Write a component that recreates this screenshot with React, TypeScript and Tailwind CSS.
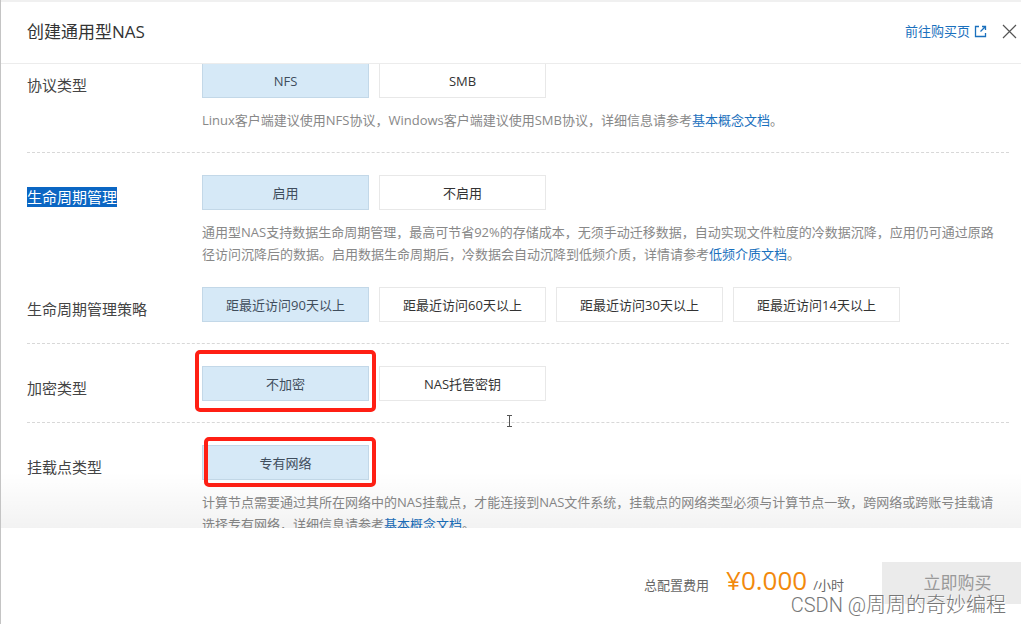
import type { ReactNode } from "react"

type OptionProps = {
    children: ReactNode
    active?: boolean
}

function Option({ children, active = false }: OptionProps) {
    return (
        <button
            type="button"
            aria-pressed={active}
            className={
                active
                    ? "w-[167px] h-[35px] pt-0.5 border border-[#c3d8e8] bg-[#d6e9f7] text-[13px] text-[#3f4d5c] cursor-pointer"
                    : "w-[167px] h-[35px] pt-0.5 border border-[#e8e8e8] bg-white text-[13px] text-[#333] cursor-pointer"
            }
        >
            {children}
        </button>
    )
}

type RowProps = {
    label: ReactNode
    options: ReactNode
    children?: ReactNode
}

function Row({ label, options, children }: RowProps) {
    return (
        <div className="flex flex-row items-start">
            <div className="w-[175px] shrink-0 mt-3 text-[15px] leading-5 text-[#444]">{label}</div>
            <div className="flex-1 min-w-0">
                <div className="flex flex-row gap-x-[10px]">{options}</div>
                {children && (
                    <p className="mt-[11px] mr-2 text-[13px] leading-[22px] text-[#888]">{children}</p>
                )}
            </div>
        </div>
    )
}

function Section({ children }: { children: ReactNode }) {
    return (
        <section className="flex flex-col gap-y-[22px] pt-[22px] pb-[21px] border-b border-dashed border-[#d8d8d8] first:pt-0 last:border-none">
            {children}
        </section>
    )
}

function DocLink({ children }: { children: ReactNode }) {
    return (
        <a href="#docs" className="text-[#1a70bd] hover:underline">
            {children}
        </a>
    )
}

function ExternalIcon() {
    return (
        <svg width="13" height="13" viewBox="0 0 13 13" fill="none" stroke="currentColor" strokeWidth="1.3" aria-hidden="true">
            <path d="M5 1.500H1.500v10h10V8" />
            <path d="M8 1.500h3.500V5M11.500 1.500L6.500 6.500" />
        </svg>
    )
}

function CloseIcon() {
    return (
        <svg width="15" height="15" viewBox="0 0 15 15" fill="none" stroke="currentColor" strokeWidth="1.2" aria-hidden="true">
            <path d="M1 1l13 13M14 1L1 14" />
        </svg>
    )
}

function TextCursor() {
    return (
        <svg className="absolute left-[504px] top-[415px]" width="9" height="12" viewBox="0 0 9 12" fill="none" stroke="#555" aria-hidden="true">
            <path d="M2 .5h5M4.500 1v10M2 11.500h5" />
        </svg>
    )
}

function Header() {
    return (
        <header className="h-16 shrink-0 flex flex-row items-center justify-between pl-[26px] pr-1 pb-0.5 border-t-2 border-t-[#f0f0f0] border-b border-b-[#ececec]">
            <h1 className="text-[17px] text-[#333]">创建通用型NAS</h1>
            <div className="flex flex-row items-center gap-x-[15px]">
                <a href="#buy" className="flex flex-row items-center gap-x-1 text-[13px] text-[#1a70bd]">
                    前往购买页
                    <ExternalIcon />
                </a>
                <button type="button" aria-label="关闭" className="text-[#555] cursor-pointer">
                    <CloseIcon />
                </button>
            </div>
        </header>
    )
}

function Footer() {
    return (
        <footer className="h-24 shrink-0 flex flex-row items-center justify-end pt-[14px] bg-white">
            <div className="flex flex-row items-baseline mr-[38px] pb-[6px]">
                <span className="mr-[17px] text-[13px] text-[#666]">总配置费用</span>
                <span className="mr-[6px] text-[26px] leading-8 text-[#f2890c]">¥0.000</span>
                <span className="text-[13px] text-[#666]">/小时</span>
            </div>
            <button type="button" disabled className="w-[139px] h-[42px] pl-3 bg-[#ebebeb] text-[17px] text-[#999]">
                立即购买
            </button>
        </footer>
    )
}

export default function App() {
    return (
        <div className="relative h-screen flex flex-col overflow-hidden border-l border-[#c4c4c4] bg-white font-['Open_Sans','Noto_Sans_CJK_SC',sans-serif]">
            <Header />

            <main className="relative flex-1 min-h-0 overflow-hidden pl-[26px] pr-3">
                <div className="-mt-px">
                    <Section>
                        <Row label="协议类型" options={<><Option active>NFS</Option><Option>SMB</Option></>}>
                            Linux客户端建议使用NFS协议，Windows客户端建议使用SMB协议，详细信息请参考<DocLink>基本概念文档</DocLink>。
                        </Row>
                    </Section>

                    <Section>
                        <Row
                            label={<span className="inline-block bg-[#0b66c3] text-white">生命周期管理</span>}
                            options={<><Option active>启用</Option><Option>不启用</Option></>}
                        >
                            通用型NAS支持数据生命周期管理，最高可节省92%的存储成本，无须手动迁移数据，自动实现文件粒度的冷数据沉降，应用仍可通过原路径访问沉降后的数据。启用数据生命周期后，冷数据会自动沉降到低频介质，详情请参考<DocLink>低频介质文档</DocLink>。
                        </Row>
                        <Row
                            label="生命周期管理策略"
                            options={
                                <>
                                    <Option active>距最近访问90天以上</Option>
                                    <Option>距最近访问60天以上</Option>
                                    <Option>距最近访问30天以上</Option>
                                    <Option>距最近访问14天以上</Option>
                                </>
                            }
                        />
                    </Section>

                    <Section>
                        <Row
                            label="加密类型"
                            options={
                                <>
                                    <div className="relative flex">
                                        <Option active>不加密</Option>
                                        <span className="absolute -top-4 -bottom-[11px] -inset-x-[7px] border-4 border-[#ff1f14] rounded-[5px] pointer-events-none" />
                                    </div>
                                    <Option>NAS托管密钥</Option>
                                </>
                            }
                        />
                    </Section>

                    <Section>
                        <Row
                            label="挂载点类型"
                            options={
                                <div className="relative flex">
                                    <Option active>专有网络</Option>
                                    <span className="absolute -top-2 -bottom-[7px] left-[2px] -right-[7px] border-4 border-[#ff1f14] rounded-[5px] pointer-events-none" />
                                </div>
                            }
                        >
                            计算节点需要通过其所在网络中的NAS挂载点，才能连接到NAS文件系统，挂载点的网络类型必须与计算节点一致，跨网络或跨账号挂载请选择专有网络，详细信息请参考<DocLink>基本概念文档</DocLink>。
                        </Row>
                    </Section>
                </div>

                <div className="absolute bottom-0 left-0 w-full h-14 bg-linear-to-t from-black/5 to-transparent pointer-events-none" />
            </main>

            <Footer />

            <TextCursor />
            <span className="absolute right-[15px] bottom-[3px] text-[20px] leading-8 text-[#777] [text-shadow:1px_1px_0_#fff] font-['Roboto','Noto_Sans_CJK_SC',sans-serif] font-light pointer-events-none">
                CSDN @周周的奇妙编程
            </span>
        </div>
    )
}
